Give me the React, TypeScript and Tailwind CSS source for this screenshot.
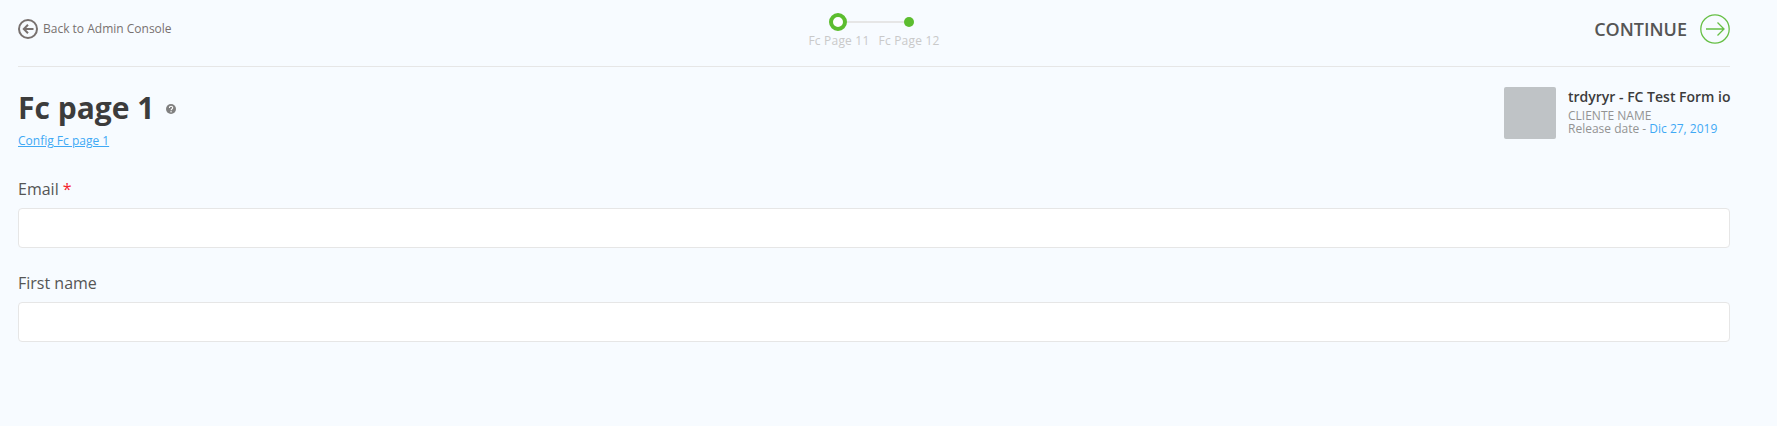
export default function App() {
  const font = { fontFamily: '"Open Sans", sans-serif' };
  return (
    <div style={font} className="min-h-[426px] w-full bg-[#f7fbff] pl-[18px] pr-[47px] text-[#555555]">
      <header className="flex h-[67px] items-start border-b border-[#e6e6e6]">
        <div className="flex flex-1 items-center gap-[5px] pt-[19px] text-[12px] leading-[20px] text-[#78716f]">
          <svg width="20" height="20" viewBox="0 0 20 20" fill="none" stroke="#78716f">
            <circle cx="10" cy="10" r="9" strokeWidth="2" />
            <path d="M15.500 10H6M10 5.800 5.800 10l4.200 4.200" strokeWidth="2" />
          </svg>
          <span>Back to Admin Console</span>
        </div>
        <div className="flex w-[130px] flex-col items-center pt-[13px]">
          <div className="mr-[5px] flex items-center">
            <span className="h-[18px] w-[18px] rounded-full border-[4px] border-[#5cbd2f] bg-white" />
            <span className="h-[2px] w-[57px] bg-[#e6e6e6]" />
            <span className="h-[10px] w-[10px] rounded-full bg-[#5cbd2f]" />
          </div>
          <div className="mt-[2px] flex gap-[9px] whitespace-nowrap text-[12px] leading-[16px] tracking-[0.2px] text-[#c9c9c9]">
            <span>Fc Page 11</span>
            <span>Fc Page 12</span>
          </div>
        </div>
        <div className="flex flex-1 items-center justify-end gap-[13px] pt-[14px]">
          <span className="text-[18px] font-semibold leading-[30px] text-[#555555]">CONTINUE</span>
          <svg width="30" height="30" viewBox="0 0 30 30" fill="none" stroke="#66bf45" strokeWidth="1.3">
            <circle cx="15" cy="15" r="14.200" />
            <path d="M6 15h18M17.500 8.500 24 15l-6.500 6.500" />
          </svg>
        </div>
      </header>

      <section className="flex items-start justify-between">
        <div className="pt-[21px]">
          <div className="flex items-center gap-[12px]">
            <h1 className="text-[30px] font-bold leading-[40px] text-[#3c3c3c]">Fc page 1</h1>
            <svg width="10" height="10" viewBox="0 0 10 10" className="mt-[2px]">
              <circle cx="5" cy="5" r="5" fill="#808080" />
              <path d="M3.400 3.900c0-2.100 3.300-2.100 3.300-.1 0 1.200-1.600 1.200-1.600 2.400" fill="none" stroke="#fff" strokeWidth="1.100" />
              <circle cx="5.050" cy="7.700" r=".7" fill="#fff" />
            </svg>
          </div>
          <a className="mt-[5px] block text-[12px] leading-[16px] text-[#3fa9f5] underline">Config Fc page 1</a>
        </div>
        <div className="flex gap-[12px] pt-[20px]">
          <div className="h-[52px] w-[52px] rounded-[2px] bg-[#bfc3c6]" />
          <div className="w-[162px] pt-[1px]">
            <div className="whitespace-nowrap text-[14px] font-semibold leading-[18px] text-[#3c3c3c]">trdyryr - FC Test Form io</div>
            <div className="mt-[3px] text-[12px] leading-[13px] text-[#939393]">CLIENTE NAME</div>
            <div className="text-[12px] leading-[13px] text-[#939393]">
              Release date - <span className="text-[#3fa9f5]">Dic 27, 2019</span>
            </div>
          </div>
        </div>
      </section>

      <form className="mt-[28px]">
        <label className="block text-[16px] leading-[24px]">
          Email <span className="text-[#f5222d]">*</span>
        </label>
        <input className="mt-[7px] block h-[40px] w-full rounded-[4px] border border-[#e6e6e6] bg-white" />
        <label className="mt-[23px] block text-[16px] leading-[24px]">First name</label>
        <input className="mt-[7px] block h-[40px] w-full rounded-[4px] border border-[#e6e6e6] bg-white" />
      </form>
    </div>
  );
}
